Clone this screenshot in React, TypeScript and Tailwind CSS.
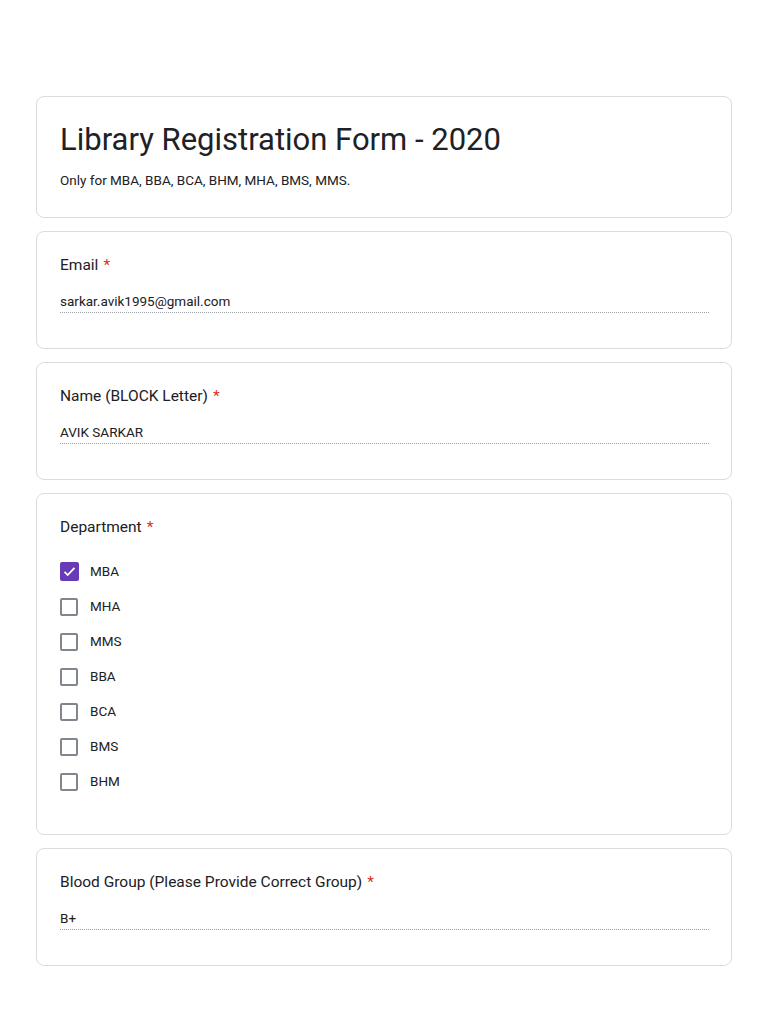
const departments = [
  { label: "MBA", checked: true },
  { label: "MHA", checked: false },
  { label: "MMS", checked: false },
  { label: "BBA", checked: false },
  { label: "BCA", checked: false },
  { label: "BMS", checked: false },
  { label: "BHM", checked: false },
];

function Card({ children }: { children: React.ReactNode }) {
  return (
    <div className="w-[696px] rounded-lg border border-[#dadce0] bg-white px-[23px]">
      {children}
    </div>
  );
}

function Label({ text }: { text: string }) {
  return (
    <div className="text-[15.5px] leading-6 text-[#202124]">
      {text}
      <span className="ml-[5px] text-[#d93025]">*</span>
    </div>
  );
}

function Answer({ value }: { value: string }) {
  return (
    <div className="mt-[14px] mr-[-1px] border-b border-dotted border-[#9aa0a6] pb-[1px] text-[13.5px] leading-5 text-[#202124]">
      {value}
    </div>
  );
}

function Checkbox({ checked }: { checked: boolean }) {
  if (checked) {
    return (
      <span className="flex h-[19px] w-[19px] items-center justify-center rounded-[2px] bg-[#673ab7]">
        <svg viewBox="0 0 24 24" className="h-[17px] w-[17px]" fill="none" stroke="white" strokeWidth="2.6">
          <path d="M5 12.5l4.5 4.5 9.5-10" />
        </svg>
      </span>
    );
  }
  return <span className="h-[18px] w-[18px] rounded-[2px] border-2 border-[#80868b]" />;
}

export default function App() {
  return (
    <div
      className="flex min-h-screen flex-col items-center gap-[13px] bg-white pt-[96px] pb-10"
      style={{ fontFamily: "Roboto, 'Liberation Sans', sans-serif" }}
    >
      <Card>
        <div className="pt-[23px] pb-[27px]">
          <h1 className="text-[31px] leading-[40px] text-[#202124]">Library Registration Form - 2020</h1>
          <p className="mt-[10px] text-[13.5px] leading-5 text-[#202124]">
            Only for MBA, BBA, BCA, BHM, MHA, BMS, MMS.
          </p>
        </div>
      </Card>

      <Card>
        <div className="pt-[21px] pb-[35px]">
          <Label text="Email" />
          <Answer value="sarkar.avik1995@gmail.com" />
        </div>
      </Card>

      <Card>
        <div className="pt-[21px] pb-[35px]">
          <Label text="Name (BLOCK Letter)" />
          <Answer value="AVIK SARKAR" />
        </div>
      </Card>

      <Card>
        <div className="pt-[21px] pb-[35px]">
          <Label text="Department" />
          <div className="mt-[15px] flex flex-col">
            {departments.map((d) => (
              <div key={d.label} className="flex h-[35px] items-center">
                <span className="flex w-[30px]">
                  <Checkbox checked={d.checked} />
                </span>
                <span className="text-[13.5px] text-[#202124]">{d.label}</span>
              </div>
            ))}
          </div>
        </div>
      </Card>

      <Card>
        <div className="pt-[21px] pb-[35px]">
          <Label text="Blood Group (Please Provide Correct Group)" />
          <Answer value="B+" />
        </div>
      </Card>
    </div>
  );
}
